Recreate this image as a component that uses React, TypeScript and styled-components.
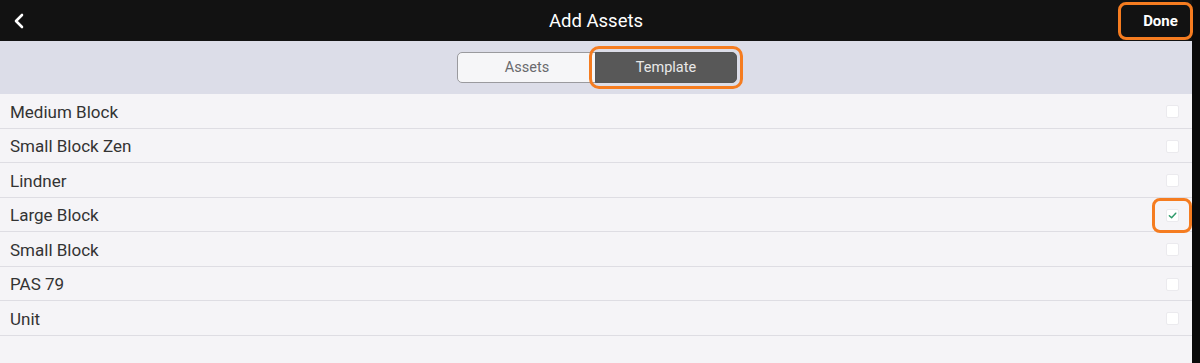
import styled, { createGlobalStyle } from "styled-components";

const GlobalStyle = createGlobalStyle`
  html, body {
    margin: 0;
    padding: 0;
    background: #0a0a0a;
  }
  body {
    font-family: Roboto, "Noto Sans", "Liberation Sans", sans-serif;
  }
`;

const Frame = styled.div`
  display: flex;
  width: 1200px;
  height: 363px;
  overflow: hidden;
  background: #0a0a0a;
`;

const Screen = styled.div`
  width: 1192px;
  display: flex;
  flex-direction: column;
  background: #f5f4f7;
`;

const Header = styled.header`
  height: 41px;
  flex-shrink: 0;
  display: grid;
  grid-template-columns: 120px 1fr 120px;
  align-items: center;
  background: #121212;
  color: #fff;
`;

const BackButton = styled.button`
  justify-self: start;
  margin-left: 12px;
  padding: 0;
  border: none;
  background: none;
  display: flex;
  cursor: pointer;
`;

const Title = styled.h1`
  margin: 0;
  text-align: center;
  font-size: 18.5px;
  font-weight: 400;
`;

const DoneButton = styled.button`
  justify-self: end;
  width: 75px;
  height: 38px;
  margin-right: -1px;
  box-sizing: border-box;
  border: 3px solid #f57c20;
  border-radius: 8px;
  background: transparent;
  color: #fff;
  font-family: inherit;
  font-size: 15px;
  font-weight: 700;
  padding: 0 0 0 10px;
  text-align: center;
  cursor: pointer;
`;

const Band = styled.div`
  height: 53px;
  flex-shrink: 0;
  display: flex;
  justify-content: center;
  align-items: center;
  background: #dcdde8;
`;

const Segmented = styled.div`
  display: flex;
  align-items: center;
  margin-left: 8px;
`;

const Segment = styled.button<{ $active?: boolean }>`
  height: 31px;
  box-sizing: border-box;
  font-family: inherit;
  font-size: 14.5px;
  cursor: pointer;
  border: 1px solid ${(p) => (p.$active ? "#555" : "#9a9a9e")};
  background: ${(p) => (p.$active ? "#585858" : "#f6f6f8")};
  color: ${(p) => (p.$active ? "#e8e8e8" : "#6a6a6e")};
  border-radius: ${(p) => (p.$active ? "0 5px 5px 0" : "5px 0 0 5px")};
  width: ${(p) => (p.$active ? "142px" : "140px")};
`;

const Highlight = styled.div`
  padding: 3px;
  border: 3px solid #f57c20;
  border-radius: 10px;
  margin-left: -8px;
  display: flex;
`;

const List = styled.ul`
  list-style: none;
  margin: 0;
  padding: 0;
`;

const Row = styled.li`
  height: 34.5px;
  box-sizing: border-box;
  display: flex;
  align-items: center;
  justify-content: space-between;
  padding: 2px 10px 0 10px;
  border-bottom: 1.5px solid #dedde3;
  color: #333;
  font-size: 17px;
`;

const CheckWrap = styled.div<{ $marked?: boolean }>`
  width: 40px;
  height: 35px;
  box-sizing: border-box;
  margin-right: -10px;
  display: flex;
  align-items: center;
  justify-content: center;
  border: 3px solid ${(p) => (p.$marked ? "#f57c20" : "transparent")};
  border-radius: 8px;
`;

const Box = styled.span`
  width: 13px;
  height: 13px;
  box-sizing: border-box;
  background: #fff;
  border: 1px solid #ebeaee;
  border-radius: 2px;
  display: flex;
  align-items: center;
  justify-content: center;
`;

const items = [
  { name: "Medium Block", checked: false },
  { name: "Small Block Zen", checked: false },
  { name: "Lindner", checked: false },
  { name: "Large Block", checked: true },
  { name: "Small Block", checked: false },
  { name: "PAS 79", checked: false },
  { name: "Unit", checked: false },
];

export default function App() {
  return (
    <>
      <GlobalStyle />
      <Frame>
        <Screen>
          <Header>
            <BackButton aria-label="Back">
              <svg width="14" height="16" viewBox="0 0 14 16">
                <path
                  d="M10 2 L4 8 L10 14"
                  fill="none"
                  stroke="#fff"
                  strokeWidth="2.6"
                  strokeLinecap="round"
                  strokeLinejoin="round"
                />
              </svg>
            </BackButton>
            <Title>Add Assets</Title>
            <DoneButton>Done</DoneButton>
          </Header>
          <Band>
            <Segmented>
              <Segment>Assets</Segment>
              <Highlight>
                <Segment $active>Template</Segment>
              </Highlight>
            </Segmented>
          </Band>
          <List>
            {items.map((item) => (
              <Row key={item.name}>
                {item.name}
                <CheckWrap $marked={item.checked}>
                  <Box>
                    {item.checked && (
                      <svg width="9" height="9" viewBox="0 0 10 10">
                        <path
                          d="M1.5 5.2 L4 7.6 L8.6 2.4"
                          fill="none"
                          stroke="#2e9a6a"
                          strokeWidth="1.6"
                          strokeLinecap="round"
                          strokeLinejoin="round"
                        />
                      </svg>
                    )}
                  </Box>
                </CheckWrap>
              </Row>
            ))}
          </List>
        </Screen>
      </Frame>
    </>
  );
}
